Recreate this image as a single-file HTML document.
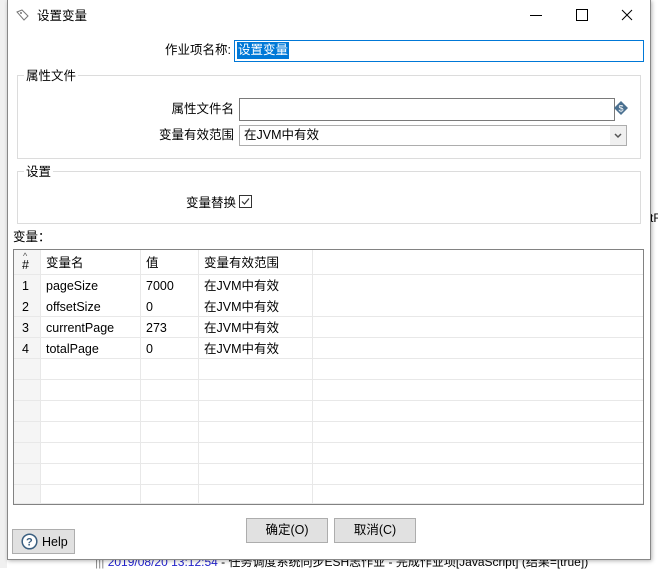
<!DOCTYPE html><html><head><meta charset="utf-8"><style>
body{margin:0;width:658px;height:568px;position:relative;overflow:hidden;background:#fff;font-family:"Liberation Sans","Noto Sans CJK SC",sans-serif;font-size:12.5px;line-height:16px;color:#000}
.a{position:absolute}
.dlg{left:7px;top:0;width:642px;height:559px;background:#fff;border:1px solid #888;border-top:none;box-shadow:1px 1px 4px rgba(0,0,0,.3)}
.grp{border:1px solid #dcdcdc}
.gt{background:#fff;padding:0 2px}
.cell{position:absolute;border-right:1px solid #e8e8e8}
.btn{background:#e1e1e1;border:1px solid #adadad;text-align:center;line-height:23px}
.t div{line-height:16px}
</style></head><body>
<div class="a" style="left:0;top:0;width:7px;height:568px;background:#f0f0f0"></div>
<div class="a" style="left:95px;top:555px;width:560px;height:13px;background:#fff;color:#000;font-size:12px;line-height:14px"><span style="color:#888">|||</span> <span style="color:#22c">2019/08/20 13:12:54</span> - 任务调度系统同步ESH志作业 - 完成作业项[JavaScript] (结果=[true])</div>
<div class="a" style="left:650px;top:210px;font-size:12px">tF</div>
<div class="a dlg"></div>
<svg class="a" style="left:15px;top:8px" width="16" height="14"><path d="M2 4 L7 2 L13 8 L9 12 Z" fill="none" stroke="#777"/><circle cx="6" cy="5" r="1" fill="#777"/></svg>
<div class="a" style="left:37px;top:8px">设置变量</div>
<div class="a" style="left:530px;top:15px;width:12px;height:1px;background:#000"></div>
<div class="a" style="left:576px;top:9px;width:10px;height:10px;border:1px solid #000"></div>
<svg class="a" style="left:621px;top:9px" width="12" height="12"><path d="M1 1L11 11M11 1L1 11" stroke="#000" stroke-width="1"/></svg>
<div class="a" style="left:140px;top:42px;width:91px;text-align:right">作业项名称:</div>
<div class="a" style="left:234px;top:40px;width:408px;height:20px;border:1px solid #0078d7"></div>
<div class="a" style="left:237px;top:42px;background:#0078d7;color:#fff;line-height:17px;padding:0 1px">设置变量</div>
<div class="a grp" style="left:17px;top:75px;width:622px;height:82px"></div>
<div class="a gt" style="left:24px;top:68px">属性文件</div>
<div class="a" style="left:140px;top:101px;width:94px;text-align:right">属性文件名</div>
<div class="a" style="left:239px;top:98px;width:374px;height:21px;border:1px solid #7a7a7a"></div>
<svg class="a" style="left:614px;top:101px" width="14" height="14"><path d="M7 0 L14 7 L7 14 L0 7Z" fill="#4a7090"/><text x="4.5" y="10.5" font-size="9" fill="#fff" font-family="Liberation Sans">$</text></svg>
<div class="a" style="left:130px;top:127px;width:104px;text-align:right">变量有效范围</div>
<div class="a" style="left:239px;top:125px;border:1px solid #adadad;line-height:19px;padding-left:4px;box-sizing:border-box;width:388px;height:21px">在JVM中有效</div>
<svg class="a" style="left:610px;top:126px" width="16" height="19"><rect width="16" height="19" fill="#f0f0f0"/><path d="M5 8L8 11L11 8" fill="none" stroke="#555" stroke-width="1.5"/></svg>
<div class="a grp" style="left:17px;top:171px;width:622px;height:51px"></div>
<div class="a gt" style="left:24px;top:164px">设置</div>
<div class="a" style="left:186px;top:195px">变量替换</div>
<svg class="a" style="left:239px;top:195px" width="13" height="13"><rect x=".5" y=".5" width="12" height="12" fill="#fff" stroke="#333"/><path d="M3 6.5L5.5 9L10 3.5" fill="none" stroke="#333" stroke-width="1.2"/></svg>
<div class="a" style="left:13px;top:229px">变量：</div>
<div class="a t" style="left:13px;top:249px;width:629px;height:254px;border:1px solid #828282;overflow:hidden">
<div class="a" style="left:0;top:0;width:26px;height:254px;background:#f5f5f5"></div>
<div class="cell" style="left:0;top:0;width:26px;height:254px"></div>
<div class="cell" style="left:26px;top:0;width:100px;height:254px"></div>
<div class="cell" style="left:127px;top:0;width:57px;height:254px"></div>
<div class="cell" style="left:185px;top:0;width:113px;height:254px"></div>
<div class="a" style="left:0;top:0;width:629px;height:24px;border-bottom:1px solid #e8e8e8"></div>
<div class="a" style="left:0;top:46px;width:629px;height:20px;border-bottom:1px solid #e8e8e8"></div>
<div class="a" style="left:0;top:67px;width:629px;height:20px;border-bottom:1px solid #e8e8e8"></div>
<div class="a" style="left:0;top:88px;width:629px;height:20px;border-bottom:1px solid #e8e8e8"></div>
<div class="a" style="left:0;top:109px;width:629px;height:20px;border-bottom:1px solid #e8e8e8"></div>
<div class="a" style="left:0;top:130px;width:629px;height:20px;border-bottom:1px solid #e8e8e8"></div>
<div class="a" style="left:0;top:151px;width:629px;height:20px;border-bottom:1px solid #e8e8e8"></div>
<div class="a" style="left:0;top:172px;width:629px;height:20px;border-bottom:1px solid #e8e8e8"></div>
<div class="a" style="left:0;top:193px;width:629px;height:20px;border-bottom:1px solid #e8e8e8"></div>
<div class="a" style="left:0;top:214px;width:629px;height:20px;border-bottom:1px solid #e8e8e8"></div>
<div class="a" style="left:0;top:235px;width:629px;height:18px;border-bottom:1px solid #e8e8e8"></div>
<div class="a" style="left:9px;top:-2px;font-size:9px;color:#555">^</div>
<div class="a" style="left:8px;top:7px">#</div>
<div class="a" style="left:32px;top:5px">变量名</div>
<div class="a" style="left:132px;top:5px">值</div>
<div class="a" style="left:190px;top:5px">变量有效范围</div>
<div class="a" style="left:8px;top:28px">1</div><div class="a" style="left:32px;top:28px">pageSize</div><div class="a" style="left:132px;top:28px">7000</div><div class="a" style="left:190px;top:28px">在JVM中有效</div>
<div class="a" style="left:8px;top:49px">2</div><div class="a" style="left:32px;top:49px">offsetSize</div><div class="a" style="left:132px;top:49px">0</div><div class="a" style="left:190px;top:49px">在JVM中有效</div>
<div class="a" style="left:8px;top:70px">3</div><div class="a" style="left:32px;top:70px">currentPage</div><div class="a" style="left:132px;top:70px">273</div><div class="a" style="left:190px;top:70px">在JVM中有效</div>
<div class="a" style="left:8px;top:91px">4</div><div class="a" style="left:32px;top:91px">totalPage</div><div class="a" style="left:132px;top:91px">0</div><div class="a" style="left:190px;top:91px">在JVM中有效</div>
</div>
<div class="a btn" style="left:246px;top:518px;width:80px;height:23px">确定(O)</div>
<div class="a btn" style="left:334px;top:518px;width:80px;height:23px">取消(C)</div>
<div class="a btn" style="left:12px;top:529px;width:61px;height:23px"></div>
<svg class="a" style="left:21px;top:533px" width="17" height="17"><circle cx="8.5" cy="8.5" r="7.3" fill="#fff" stroke="#3a5f80" stroke-width="1.5"/><text x="5" y="12.5" font-size="11" fill="#3a5f80" font-family="Liberation Sans" font-weight="bold">?</text></svg>
<div class="a" style="left:42px;top:534px">Help</div>
</body></html>
